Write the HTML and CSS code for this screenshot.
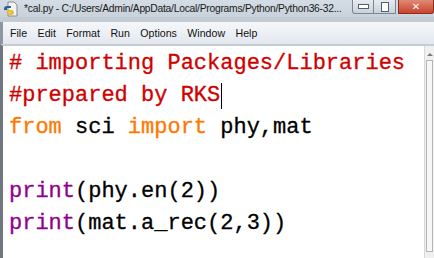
FILE: index.html
```html
<!DOCTYPE html>
<html>
<head>
<meta charset="utf-8">
<link rel="stylesheet" href="styles.css">
</head>
<body>
<div class="window">
  <div class="titlebar">
    <svg class="app-icon" width="16" height="16" viewBox="0 0 16 16">
      <path d="M5 1h6l3 3v11H5z" fill="#f4f4f4" stroke="#8a8a8a" stroke-width="1"/>
      <path d="M1 8c0-2 1-3 3-3h4v2H4v2H1z" fill="#2f5f9a"/>
      <path d="M2 9h6c2 0 3 1 3 2.5S10 14 8 14H4v-2h4" fill="#e4c030"/>
    </svg>
    <span class="title">*cal.py - C:/Users/Admin/AppData/Local/Programs/Python/Python36-32...</span>
    <div class="controls">
      <span class="ctrl min"><i></i></span>
      <span class="ctrl max"><i></i></span>
      <span class="ctrl close">✕</span>
    </div>
  </div>
  <div class="menubar">
    <span class="menu">File</span>
    <span class="menu">Edit</span>
    <span class="menu">Format</span>
    <span class="menu">Run</span>
    <span class="menu">Options</span>
    <span class="menu">Window</span>
    <span class="menu">Help</span>
  </div>
  <div class="body">
    <div class="editor">
      <div class="line"><span class="cm"># importing Packages/Libraries</span></div>
      <div class="line"><span class="cm">#prepared by RKS</span><span class="cursor"></span></div>
      <div class="line"><span class="kw">from</span> sci <span class="kw">import</span> phy,mat</div>
      <div class="line"> </div>
      <div class="line"><span class="bi">print</span>(phy.en(2))</div>
      <div class="line"><span class="bi">print</span>(mat.a_rec(2,3))</div>
    </div>
    <div class="scrollbar">
      <div class="arrow"></div>
      <div class="track"></div>
    </div>
  </div>
</div>
</body>
</html>
```
FILE: styles.css
```css
html, body {
  margin: 0;
  padding: 0;
  width: 434px;
  height: 258px;
  overflow: hidden;
  background: #ffffff;
}
.window {
  display: flex;
  flex-direction: column;
  height: 258px;
  background: #c3cbd4;
}
.titlebar {
  flex: none;
  height: 17px;
  display: flex;
  align-items: center;
  background: linear-gradient(#d4dce5, #c9d1da);
  font-family: "Liberation Sans", Arial, sans-serif;
  font-size: 10.3px;
  color: #1a1a1a;
  overflow: hidden;
  white-space: nowrap;
}
.app-icon {
  margin-left: 3px;
  flex: none;
}
.title {
  margin-left: 5px;
  flex: 1;
  min-width: 0;
  overflow: hidden;
  letter-spacing: -0.25px;
}
.controls {
  display: flex;
  align-self: flex-start;
  height: 14px;
  flex: none;
  margin-left: 2px;
}
.ctrl {
  display: flex;
  align-items: center;
  justify-content: center;
  height: 14px;
  border: 1px solid #7d8794;
  border-top: none;
  box-sizing: border-box;
}
.min, .max {
  width: 22px;
  background: linear-gradient(#e6ebf0, #c9d2dc);
}
.min {
  border-radius: 0 0 0 3px;
}
.min i {
  display: block;
  width: 9px;
  height: 3px;
  background: #fff;
  border: 1px solid #55606d;
}
.max {
  border-left: none;
}
.max i {
  display: block;
  width: 6px;
  height: 8px;
  border: 1px solid #55606d;
  background: #fff;
}
.close {
  width: 36px;
  margin-left: 2px;
  background: linear-gradient(#e08a76, #c8442c);
  color: #fff;
  font-family: "DejaVu Sans", sans-serif;
  font-size: 10px;
  font-weight: bold;
  border-color: #8a3020;
  border-radius: 0 0 3px 0;
}
.menubar {
  flex: none;
  height: 22px;
  margin-top: 5px;
  display: flex;
  align-items: center;
  gap: 10.5px;
  background: linear-gradient(#f5f7fa, #e3e8ef);
  border-left: 3px solid #8e96a0;
  font-family: "Liberation Sans", Arial, sans-serif;
  font-size: 10.6px;
  color: #111;
  box-sizing: border-box;
  padding-left: 7px;
}
.body {
  flex: 1;
  min-height: 0;
  display: flex;
  border-left: 3px solid #6f7780;
  border-top: 2px solid #c4ccd6;
  background: #fff;
}
.editor {
  flex: 1;
  padding: 2px 0 0 6px;
  font-family: "Courier New", "Nimbus Mono PS", "FreeMono", "Liberation Mono", monospace;
  font-size: 22px;
  line-height: 32px;
  color: #000;
  -webkit-text-stroke: 0.3px currentColor;
}
.line {
  height: 32px;
  display: flex;
  align-items: center;
  white-space: pre;
}
.cm { color: #d00000; }
.kw { color: #ff7700; }
.bi { color: #900090; }
.cursor {
  display: inline-block;
  width: 1px;
  height: 26px;
  background: #000;
  margin-left: 1px;
}
.scrollbar {
  width: 10px;
  display: flex;
  flex-direction: column;
  background: #f0f0f0;
  border-left: 1px solid #d8d8d8;
  padding: 4px 0 6px 0;
  box-sizing: border-box;
}
.arrow {
  height: 10px;
  position: relative;
}
.arrow::before {
  content: "";
  position: absolute;
  left: 2px;
  top: 3px;
  border-left: 3px solid transparent;
  border-right: 3px solid transparent;
  border-bottom: 3px solid #7a7a7a;
}
.track {
  flex: 1;
  margin: 0 1px;
  border: 1px solid #b5b5b5;
  background: #f7f7f7;
}
```
